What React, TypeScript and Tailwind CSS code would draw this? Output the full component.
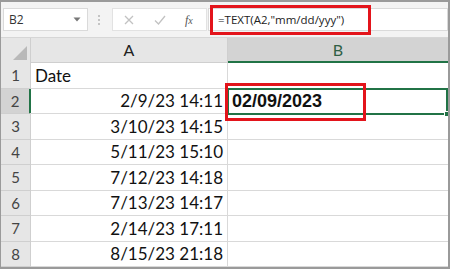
import React from "react";

const ROWS: { n: number; a: string; h: string }[] = [
  { n: 1, a: "Date", h: "h-[26px]" },
  { n: 2, a: "2/9/23 14:11", h: "h-[25px]" },
  { n: 3, a: "3/10/23 14:15", h: "h-[26px]" },
  { n: 4, a: "5/11/23 15:10", h: "h-[25px]" },
  { n: 5, a: "7/12/23 14:18", h: "h-[26px]" },
  { n: 6, a: "7/13/23 14:17", h: "h-[25px]" },
  { n: 7, a: "2/14/23 17:11", h: "h-[26px]" },
  { n: 8, a: "8/15/23 21:18", h: "h-[25px]" },
];

const cellFont = { fontFamily: "Lato, 'Open Sans', sans-serif" };

function Toolbar() {
  return (
    <div className="relative flex items-center h-[36px] bg-[#f3f3f3] border-b border-[#d6d6d6] pl-[2px]">
      {/* name box */}
      <div className="flex items-center justify-between w-[85px] h-[23px] bg-white border border-[#dadada] pl-[5px] pr-[6px]">
        <span className="text-[12px] text-[#333]" style={{ fontFamily: "'Open Sans', sans-serif" }}>
          B2
        </span>
        <svg width="8" height="5" viewBox="0 0 8 5">
          <path d="M0.5 0.5 L7.5 0.5 L4 4.5 Z" fill="#777" />
        </svg>
      </div>
      {/* grip dots */}
      <div className="flex flex-col gap-[2px] ml-[10px] mr-[12px]">
        <span className="w-[2px] h-[2px] bg-[#c4c4c4]" />
        <span className="w-[2px] h-[2px] bg-[#c4c4c4]" />
        <span className="w-[2px] h-[2px] bg-[#c4c4c4]" />
      </div>
      {/* cancel / enter / fx */}
      <div className="flex items-center w-[95px] h-[23px] bg-white border border-[#e2e2e2] pl-[11px]">
        <svg width="10" height="10" viewBox="0 0 10 10">
          <path d="M1 1 L9 9 M9 1 L1 9" stroke="#c2c2c2" strokeWidth="1.3" />
        </svg>
        <svg width="12" height="10" viewBox="0 0 12 10" className="ml-[20px]">
          <path d="M1 5.5 L4.5 9 L11 1" stroke="#c2c2c2" strokeWidth="1.3" fill="none" />
        </svg>
        <span
          className="ml-[19px] text-[12px] italic text-[#555]"
          style={{ fontFamily: "'Liberation Serif', serif" }}
        >
          f<span className="text-[10px]">x</span>
        </span>
      </div>
      {/* formula input */}
      <div className="flex items-center flex-1 h-[23px] bg-white border border-[#dadada] ml-[1px] pl-[9px]">
        <span className="text-[11.5px] text-[#222]" style={{ fontFamily: "'Open Sans', sans-serif" }}>
          =TEXT(A2,"mm/dd/yyy")
        </span>
      </div>
      {/* annotation */}
      <div className="absolute left-[209px] top-[3px] w-[161px] h-[30px] border-[3px] border-[#e3141b]" />
    </div>
  );
}

export default function App() {
  return (
    <div className="w-[450px] h-[269px] bg-white border-t-2 border-b-2 border-l border-r-2 border-[#9a9a9a] overflow-hidden">
      <Toolbar />
      {/* column headers */}
      <div className="flex h-[25px]" style={cellFont}>
        <div className="relative w-[30px] bg-[#e6e6e6] border-r border-[#cfcfcf]">
          <svg width="14" height="14" viewBox="0 0 14 14" className="absolute right-[3px] bottom-[3px]">
            <path d="M14 0 L14 14 L0 14 Z" fill="#b9b9b9" />
          </svg>
        </div>
        <div className="flex items-center justify-center w-[197px] bg-[#e6e6e6] border-r border-[#cfcfcf] border-b border-b-[#cfcfcf] text-[16px] text-[#222]">
          A
        </div>
        <div className="flex items-center justify-center flex-1 bg-[#d3d3d3] border-b-2 border-[#217346] text-[16px] text-[#2f5f45]">
          B
        </div>
      </div>
      {/* rows */}
      {ROWS.map((r) => {
        const sel = r.n === 2;
        return (
          <div key={r.n} className={`flex ${r.h}`} style={cellFont}>
            <div
              className={`flex items-center justify-center w-[30px] border-b border-[#cfcfcf] text-[15px] ${
                sel
                  ? "bg-[#d3d3d3] border-r-2 border-r-[#217346] text-[#444]"
                  : "bg-[#e6e6e6] border-r border-r-[#cfcfcf] text-[#444]"
              }`}
            >
              {r.n}
            </div>
            <div
              className={`flex items-center w-[197px] border-r border-b border-[#d9d9d9] text-[17px] text-[#111] ${
                r.n === 1 ? "justify-start pl-[4px]" : "justify-end pr-[4px]"
              } ${sel ? "-ml-px w-[198px]" : ""}`}
            >
              {r.a}
            </div>
            {sel ? (
              <div className="relative flex items-center flex-1 -mt-px -ml-px mb-[-1px] border-2 border-[#217346]">
                <span className="pl-[3px] text-[18px] font-bold text-[#111]" style={{ fontFamily: "'Liberation Sans', Arial, sans-serif" }}>
                  02/09/2023
                </span>
                <span className="absolute right-[-4px] bottom-[-4px] w-[6px] h-[6px] bg-[#217346] border border-white" />
                <div className="absolute left-[-4px] top-[-7px] w-[141px] h-[38px] border-[3px] border-[#e3141b]" />
              </div>
            ) : (
              <div className="flex-1 border-b border-[#d9d9d9]" />
            )}
          </div>
        );
      })}
    </div>
  );
}
